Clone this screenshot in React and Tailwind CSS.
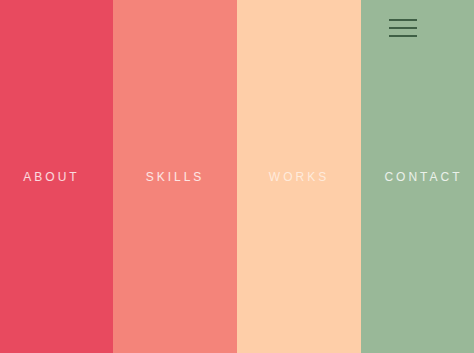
import React from "react";

export default function App() {
  const label = "text-[12px] tracking-[3px] text-white/80 leading-none";
  return (
    <div
      className="flex h-[353px] w-[474px] overflow-hidden"
      style={{ fontFamily: '"Liberation Sans", Arial, sans-serif' }}
    >
      <div className="flex w-[113px] items-center justify-center bg-[#e84a5f] pr-[10px]">
        <span className={label}>ABOUT</span>
      </div>
      <div className="flex w-[124px] items-center justify-center bg-[#f4847a]">
        <span className={label}>SKILLS</span>
      </div>
      <div className="flex w-[124px] items-center justify-center bg-[#fecea8]">
        <span className="text-[12px] tracking-[3px] text-white/60 leading-none">WORKS</span>
      </div>
      <div className="relative flex w-[113px] items-center justify-center bg-[#99b898] pl-[12px]">
        <span className={label}>CONTACT</span>
        <div className="absolute left-[28px] top-[19px] flex w-[28px] flex-col gap-[6.5px]">
          <div className="h-[1.5px] bg-[#3f5f45]" />
          <div className="h-[1.5px] bg-[#3f5f45]" />
          <div className="h-[1.5px] bg-[#3f5f45]" />
        </div>
      </div>
    </div>
  );
}
